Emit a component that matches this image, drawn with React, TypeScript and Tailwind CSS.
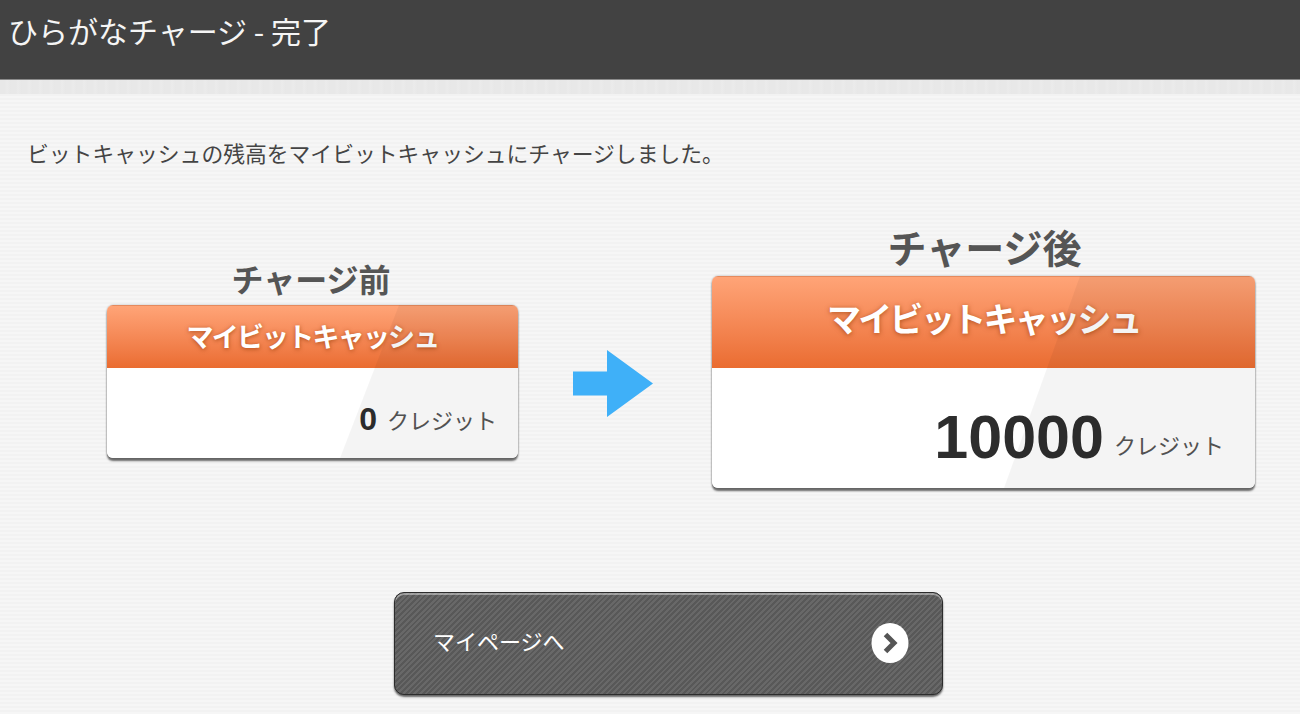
const jp = "font-['Noto_Sans_CJK_JP','Noto_Sans_CJK_SC',sans-serif]";

// One balance card. The header and amount sizes differ between the two cards.
function BalanceCard({
  title,
  amount,
  big,
}: {
  title: string;
  amount: string;
  big?: boolean;
}) {
  return (
    <div className="flex flex-col">
      <h2
        className={
          big
            ? "mb-[12px] text-center text-[39px] leading-[36px] font-bold text-[#555555] pl-[2px]"
            : "mb-[6px] text-center text-[32px] leading-[41px] font-bold text-[#555555] pr-[3px]"
        }
      >
        {title}
      </h2>
      <div
        className={
          big
            ? "relative w-[543px] rounded-[6px] overflow-hidden shadow-[0_3px_2px_rgba(60,60,60,0.75),0_0_2px_rgba(0,0,0,0.3)]"
            : "relative w-[411px] rounded-[6px] overflow-hidden shadow-[0_3px_2px_rgba(60,60,60,0.75),0_0_2px_rgba(0,0,0,0.3)]"
        }
      >
        <div
          className={
            big
              ? "flex h-[92px] items-center justify-center bg-gradient-to-b from-[#ffa477] to-[#ea6c30] border-t border-[#e58a5e] pb-[10px] text-[34px] tracking-[-2.7px] font-bold text-white [text-shadow:0_1px_5px_rgba(150,60,10,0.75)]"
              : "flex h-[63px] items-center justify-center bg-gradient-to-b from-[#ffa477] to-[#ea6c30] border-t border-[#e58a5e] pb-[2px] text-[27px] tracking-[-1.8px] font-bold text-white [text-shadow:0_1px_4px_rgba(150,60,10,0.75)]"
          }
        >
          マイビットキャッシュ
        </div>
        <div
          className={
            big
              ? "flex h-[120px] items-end justify-end bg-white pr-[31px] pb-[21px] text-[#333333]"
              : "flex h-[90px] items-end justify-end bg-white pr-[21px] pb-[21px] text-[#333333]"
          }
        >
          <span
            className={
              big
                ? "font-['Liberation_Sans',sans-serif] text-[61px] leading-[60px] font-bold text-[#2d2d2d]"
                : "font-['Liberation_Sans',sans-serif] text-[32px] leading-[36px] font-bold text-[#2d2d2d]"
            }
          >
            {amount}
          </span>
          <span className={big ? "ml-[10px] text-[22px] leading-[46px] text-[#555555]" : "ml-[10px] text-[22px] leading-[36px] text-[#555555]"}>
            クレジット
          </span>
        </div>
        {/* diagonal sheen over the right side of the card */}
        <div
          className={
            big
              ? "pointer-events-none absolute inset-0 bg-black/[0.045] [clip-path:polygon(368px_0,100%_0,100%_100%,292px_100%)]"
              : "pointer-events-none absolute inset-0 bg-black/[0.045] [clip-path:polygon(292px_0,100%_0,100%_100%,233px_100%)]"
          }
        />
      </div>
    </div>
  );
}

export default function App() {
  return (
    <div
      className={`${jp} h-[714px] w-[1300px] overflow-hidden bg-[#f4f4f4] bg-[repeating-linear-gradient(0deg,#f6f6f6_0px,#f6f6f6_2px,#eeeeee_3px,#f6f6f6_4px)]`}
    >
      <header className="h-[80px] border-b border-[#8a8a8a] bg-[#424242] pl-[8px] pt-[10px] text-[30px] leading-[40px] text-[#f5f5f5]">
        ひらがなチャージ - 完了
      </header>
      <div className="h-[14px] bg-[repeating-linear-gradient(90deg,#e8e8e8_0px,#e8e8e8_5px,#ebebeb_7px,#e7e7e7_11px)]" />

      <p className="mt-[47px] pl-[27px] text-[21.8px] leading-[24px] text-[#444444]">
        ビットキャッシュの残高をマイビットキャッシュにチャージしました。
      </p>

      <div className="mt-[63px] flex items-center pl-[107px]">
        <BalanceCard title="チャージ前" amount="0" />
        <svg className="ml-[55px] mt-[51px]" width="81" height="67" viewBox="0 0 81 67">
          <path d="M0 21.5H34V0L80 33.5L34 67V45.5H0Z" fill="#3fb0f8" />
        </svg>
        <div className="ml-[58px]">
          <BalanceCard title="チャージ後" amount="10000" big />
        </div>
      </div>

      <button className="ml-[394px] mt-[104px] flex h-[103px] w-[549px] items-center justify-between rounded-[10px] border border-[#2c2c2c] bg-[#5a5a5a] bg-[repeating-linear-gradient(135deg,#686868_0px,#686868_2px,#585858_2px,#585858_4px)] pl-[38px] pr-[33px] text-[22px] text-white shadow-[inset_0_2px_0_rgba(255,255,255,0.4),0_2px_2px_rgba(40,40,40,0.7)]">
        <span className="mb-[7px]">マイページへ</span>
        <svg className="mb-[1px]" width="38" height="40" viewBox="0 0 38 40">
          <ellipse cx="19" cy="20" rx="18.5" ry="20" fill="#ffffff" />
          <path d="M14.5 11.5L23 20L14.5 28.5" fill="none" stroke="#555555" strokeWidth="5" />
        </svg>
      </button>
    </div>
  );
}
